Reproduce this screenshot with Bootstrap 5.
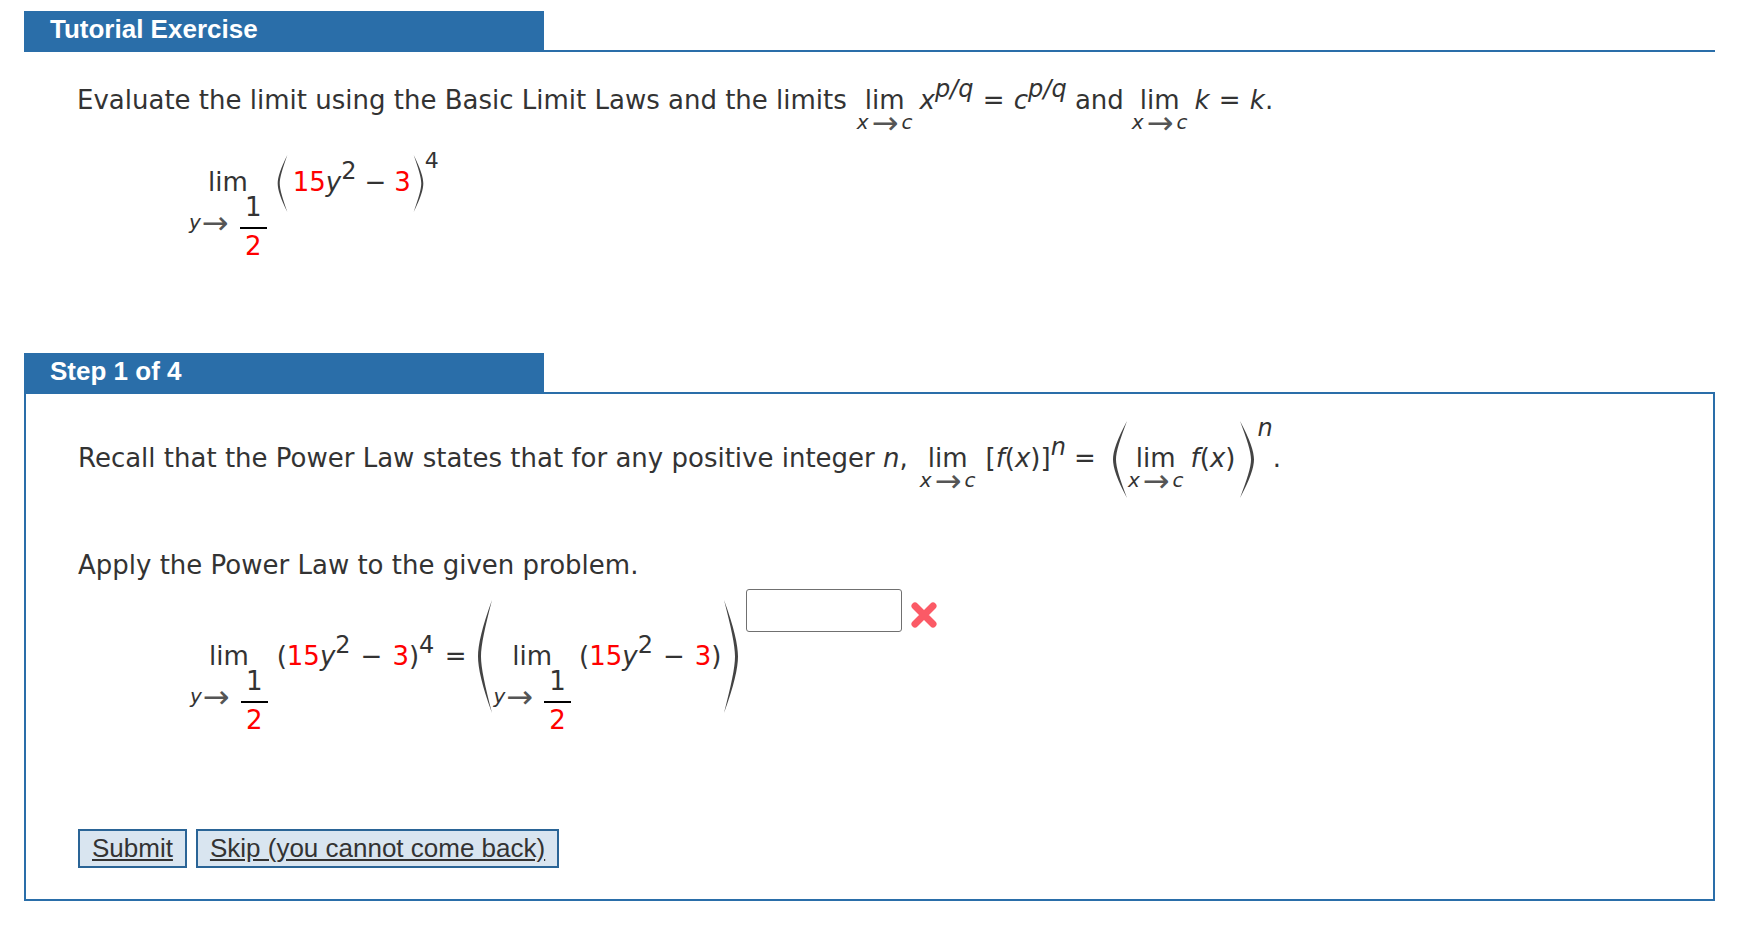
<!DOCTYPE html>
<html lang="en"><head><meta charset="utf-8"><title>Tutorial Exercise</title>
<link href="https://cdn.jsdelivr.net/npm/bootstrap@5.3.0/dist/css/bootstrap.min.css" rel="stylesheet">
<style>
html,body{background:#fff}
body{margin:0;font-family:"DejaVu Sans",sans-serif;font-size:26px;color:#333;line-height:31px}
.sheet{padding:11px 25px 0 24px}
.head-line{border-bottom:2px solid #2a6ea9;height:41px}
.head-tab{width:520px;height:41px;background:#2a6ea9;color:#fff;font:bold 26px/36px "Liberation Sans",sans-serif;padding-left:26px}
.intro{padding:33px 0 0 53px}
.mrow{white-space:nowrap}
.limit{display:inline-flex;flex-direction:column;align-items:center;flex:none}
.limit>span:first-child{line-height:24px}
.under{display:flex;align-items:center;font-size:20px;line-height:20px;margin-top:-2px}
.under.fr{margin-top:0}
.ar{font-style:normal;font-size:32px;line-height:20px;margin:3px 3px 0;color:#555}
.yto{display:inline-flex;align-items:center;margin-bottom:10px}
.yto .ar{margin:3px 1px 0}
.frac{display:inline-flex;flex-direction:column;align-items:center;width:27px;margin-left:10px;font-size:26px;line-height:26px;font-style:normal}
.frac-bar{display:block;width:100%;border-top:2px solid #000;margin:7px 0 4px}
i{font-style:italic}
.red{color:#f00}
.eq{margin:0 1px}
.up{font-size:24px;vertical-align:12px;line-height:0}
.up2{font-size:22px;vertical-align:23px;line-height:0}
.up3{font-size:24px;vertical-align:31px;line-height:0}
.pw{flex:none;line-height:0}
.paren{fill:#444}
.flip{transform:scaleX(-1)}
.p57{width:11px;height:57px;vertical-align:-21px}
.p77{width:16px;height:77px;vertical-align:-31px}
.p113{width:16px;height:113px;vertical-align:-48px}
.mn{margin:0 8px}
.mn2{margin:0 10px}
.step-box{border:solid #2a6ea9;border-width:0 2px 2px;height:507px;padding:0 0 0 52px}
.answer{width:156px;height:43px;border:1.5px solid #707070;border-radius:3px;padding:0;flex:none;background:#fff;align-self:flex-start;margin:-11px 0 0 7px}
.wrong{align-self:flex-start;margin:1px 0 0 8px;flex:none}
.skip-row{gap:9px}
.act{background:#d9e5f0;border:2px solid #2a6496;border-radius:0;color:#333;font:26px/35px "Liberation Sans",sans-serif;text-decoration:underline;padding:0 12px;height:39px;--bs-btn-hover-bg:#d9e5f0;--bs-btn-hover-color:#333;--bs-btn-hover-border-color:#2a6496}
#r2{margin:22px 0 0 112px}
#h2{margin-top:94px}
#r3{padding-top:27px}
#p4{margin-top:52px}
#r5{margin:19px 0 0 112px}
#btns{margin-top:96px}
.g10{margin-left:10px}.g5{margin-left:5px}.g6{margin-left:6px}.g7{margin-left:7px}.g4{margin-left:4px}.g3{margin-left:3px}.g2{margin-left:2px}.g1{margin-left:1px}.g9{margin-left:9px}.g11{margin-left:11px}.g12{margin-left:12px}.g14{margin-left:14px}.g8{margin-left:8px}.g16{margin-left:16px}
</style></head><body>
<svg width="0" height="0" class="d-block"><defs><symbol id="pr" viewBox="0 0 16 100" preserveAspectRatio="none"><path d="M15 0C5 24 1 40 1 50s4 26 14 50C8 76 4 60 4 50S8 24 15 0Z"/></symbol></defs></svg>
<main class="sheet">
<div class="head-line"><div class="head-tab">Tutorial Exercise</div></div>
<section class="intro">
<div class="mrow d-flex align-items-baseline" id="r1">
<span>Evaluate the limit using the Basic Limit Laws and the limits</span>
<span class="limit g10"><span>lim</span><i class="under">x<span class="ar">→</span>c</i></span>
<span class="g7"><i>x</i><i class="up">p/q</i> <span class="eq">=</span> <i>c</i><i class="up">p/q</i> and</span>
<span class="limit g8"><span>lim</span><i class="under">x<span class="ar">→</span>c</i></span>
<span class="g7"><i>k</i> <span class="eq">=</span> <i>k</i>.</span>
</div>
<div class="mrow d-flex align-items-baseline" id="r2">
<span class="limit"><span>lim</span><i class="under fr"><span class="yto">y<span class="ar">→</span></span><span class="frac"><span>1</span><span class="frac-bar"></span><span class="red">2</span></span></i></span>
<span class="pw g10"><svg class="paren p57"><use href="#pr"/></svg></span>
<span class="g5"><span class="red">15</span><i>y</i><span class="up">2</span><span class="mn">−</span><span class="red">3</span></span>
<span class="pw g2"><svg class="paren p57 flip"><use href="#pr"/></svg></span>
<span class="g1"><span class="up2">4</span></span>
</div>
</section>
<div class="head-line" id="h2"><div class="head-tab">Step 1 of 4</div></div>
<section class="step-box">
<div class="mrow d-flex align-items-baseline" id="r3">
<span>Recall that the Power Law states that for any positive integer <i>n</i>,</span>
<span class="limit g12"><span>lim</span><i class="under">x<span class="ar">→</span>c</i></span>
<span class="g10">[<i>f</i>(<i>x</i>)]<i class="up">n</i> =</span>
<span class="pw g16"><svg class="paren p77"><use href="#pr"/></svg></span>
<span class="limit"><span>lim</span><i class="under">x<span class="ar">→</span>c</i></span>
<span class="g7"><i>f</i>(<i>x</i>)</span>
<span class="pw g4"><svg class="paren p77 flip"><use href="#pr"/></svg></span>
<span class="g2"><i class="up3">n</i></span><span>.</span>
</div>
<p class="mb-0" id="p4">Apply the Power Law to the given problem.</p>
<div class="mrow d-flex align-items-baseline" id="r5">
<span class="limit"><span>lim</span><i class="under fr"><span class="yto">y<span class="ar">→</span></span><span class="frac"><span>1</span><span class="frac-bar"></span><span class="red">2</span></span></i></span>
<span class="g9">(<span class="red">15</span><i>y</i><span class="up">2</span><span class="mn2">−</span><span class="red">3</span>)<span class="up">4</span> <span class="g2">=</span></span>
<span class="pw g11"><svg class="paren p113"><use href="#pr"/></svg></span>
<span class="limit"><span>lim</span><i class="under fr"><span class="yto">y<span class="ar">→</span></span><span class="frac"><span>1</span><span class="frac-bar"></span><span class="red">2</span></span></i></span>
<span class="g8">(<span class="red">15</span><i>y</i><span class="up">2</span><span class="mn2">−</span><span class="red">3</span>)</span>
<span class="pw g1"><svg class="paren p113 flip"><use href="#pr"/></svg></span>
<input class="answer" type="text" aria-label="exponent">
<svg class="wrong" width="28" height="28" viewBox="0 0 28 28"><path d="M5 5L23 23M23 5L5 23" stroke="#fb5a66" stroke-width="7" stroke-linecap="round"/></svg>
</div>
<div class="d-flex skip-row" id="btns">
<button type="button" class="btn act">Submit</button>
<button type="button" class="btn act">Skip (you cannot come back)</button>
</div>
</section>
</main>
</body></html>
